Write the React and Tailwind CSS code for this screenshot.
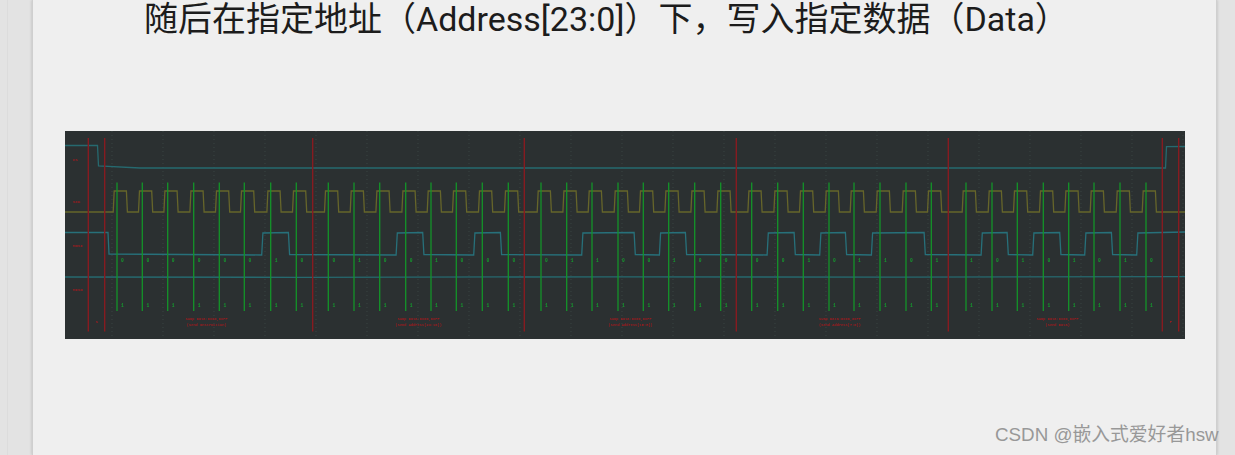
import React from 'react';

const greens = [
  117, 142.3, 167.7, 193.7, 219.3, 244.3, 270.7, 296.3,
  328.3, 354, 379.7, 405.7, 431, 456.3, 482.3, 508.3,
  541, 566.7, 592, 618, 643.3, 668.7, 694.7, 720.7,
  751.7, 777.7, 803.3, 829, 854, 880, 906, 931.3,
  966, 992, 1017.3, 1043.3, 1068.7, 1094, 1120, 1146,
];
const reds = [88.3, 104.7, 312.7, 524.3, 736.3, 948.3, 1162.3, 1178.7];
const bits = '00000010' + '01001000' + '01100100' + '00101101' + '10101010';
const mosiEdges = [
  [262.3, 289], [396.7, 423.3], [474.3, 501], [582.3, 634.7], [660, 686],
  [767.7, 794.7], [820.3, 846], [872, 924.7], [981.7, 1007.7], [1033.3, 1060.3],
  [1085.3, 1112], [1137.3, 1185],
];
const notes = [
  [206.7, '(Send Instruction)'],
  [418.7, '(Send Address[23:16])'],
  [630.7, '(Send Address[15:8])'],
  [840, '(Send Address[7:0])'],
  [1057.7, '(Send Data)'],
];
const names = [['CS', 161], ['SCK', 202.5], ['MOSI', 247], ['MISO', 290.5]];

function sckPath() {
  let d = 'M65 212 L';
  greens.forEach(x => {
    d += `${x - 3.8} 212 L${x - 2.8} 191 L${x + 9.4} 191 L${x + 10.4} 212 L`;
  });
  return d + '1185 212';
}

function mosiPath() {
  let d = 'M65 232.5 L108 232.5 L109 254 L';
  mosiEdges.forEach(([a, b], i) => {
    d += `${a - 0.6} 255 L${a + 0.6} 233 L`;
    d += i === mosiEdges.length - 1 ? `${b} 232` : `${b - 0.6} 232.5 L${b + 0.6} 254.5 L`;
  });
  return d;
}

function Chart() {
  const grid = [];
  for (let x = 112; x < 1185; x += 51) grid.push(x);

  return (
    <svg viewBox="65 131 1120 208" className="block h-[208px] w-[1120px] bg-[#2b3031] blur-[0.4px]">
      {grid.map(x => (
        <line key={x} x1={x} x2={x} y1="131" y2="339" stroke="#3c4a48" strokeWidth="0.8" strokeDasharray="1 3" />
      ))}
      <path d="M65 145.5 L97.5 145.5 L98.5 166 L140 168 L1165.5 168 L1166.5 146.7 L1185 146.5" fill="none" stroke="#26696f" strokeWidth="1.3" />
      <path d={sckPath()} fill="none" stroke="#66652a" strokeWidth="1.3" />
      <path d={mosiPath()} fill="none" stroke="#27707a" strokeWidth="1.3" />
      <path d="M65 277 L300 277.3 L620 276.8 L900 277.2 L1185 276.6" fill="none" stroke="#26696f" strokeWidth="1.3" />
      {greens.map(x => (
        <line key={x} x1={x} x2={x} y1="182.5" y2="311" stroke="#139429" strokeWidth="1.3" />
      ))}
      {reds.map(x => (
        <line key={x} x1={x} x2={x} y1="138" y2="331.5" stroke="#861b20" strokeWidth="1.4" />
      ))}
      <g fontFamily="'Liberation Mono', monospace" fontWeight="700">
        <g fill="#159a2e" textAnchor="middle" fontSize="4.6">
          {greens.map((x, i) => (
            <g key={x}>
              <text x={x + 5.5} y="261.6">{bits[i]}</text>
              <text x={x + 5.5} y="307">1</text>
            </g>
          ))}
        </g>
        <g fill="#a01c20" fontSize="3.7">
          {names.map(([n, y]) => (
            <text key={n} x="73" y={y} fontSize="4.2">{n}</text>
          ))}
          <text x="95.8" y="323" fontSize="4.2">S</text>
          <text x="1169.8" y="323" fontSize="4.2">P</text>
          <g textAnchor="middle">
            {notes.map(([x, t]) => (
              <g key={x}>
                <text x={x} y="320">Swap Data:0x00,0xFF</text>
                <text x={x} y="326.2">{t}</text>
              </g>
            ))}
          </g>
        </g>
      </g>
    </svg>
  );
}

export default function App() {
  return (
    <div className="relative flex h-[455px] w-[1235px] overflow-hidden bg-[#e3e3e3] font-['Roboto','Noto_Sans_CJK_SC',sans-serif]">
      <div className="w-[32px] shrink-0 pl-[7px]">
        <div className="h-full w-px bg-[#dcdcdc]" />
      </div>
      <div className="w-[1185px] shrink-0 border-x border-[#cfcfcf] bg-[#efefef] shadow-[0_0_3px_rgba(0,0,0,0.2)]">
        <h1 className="ml-[111px] whitespace-nowrap text-[34px] font-normal leading-[38px] text-[#1c1c1c]">
          随后在指定地址（Address[23:0]）下，写入指定数据（Data）
        </h1>
        <div className="ml-[32px] mt-[93px]">
          <Chart />
        </div>
      </div>
      <div className="absolute left-[995px] top-[423px] whitespace-nowrap font-['Liberation_Sans','Noto_Sans_CJK_SC',sans-serif] text-[18.8px] leading-[24px] text-[#989898]">
        CSDN @嵌入式爱好者hsw
      </div>
    </div>
  );
}
